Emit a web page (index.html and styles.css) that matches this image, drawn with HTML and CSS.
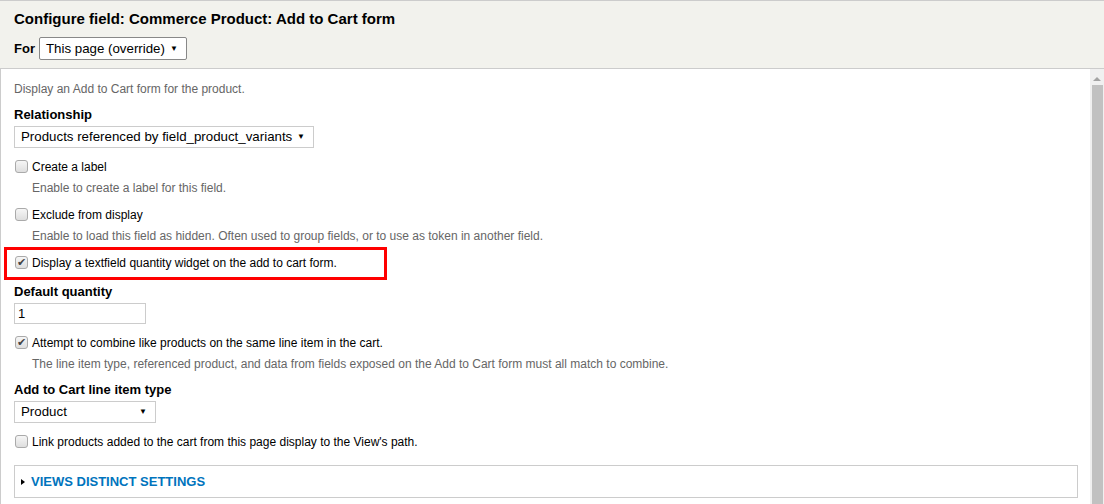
FILE: index.html
```html
<!DOCTYPE html>
<html lang="en">
  <head>
    <meta charset="UTF-8" />
    <title>Configure field</title>
    <link rel="stylesheet" href="styles.css">
  </head>
  <body>
    <div id="dialog">
      <div class="header">
        <h1>Configure field: Commerce Product: Add to Cart form</h1>
        <div class="for-row">
          <span class="for-label">For</span>
          <div class="select select-for">This page (override) <span class="arrow">&#9660;</span></div>
        </div>
      </div>
      <div class="body">
        <div class="content">
          <p class="desc top-desc">Display an Add to Cart form for the product.</p>

          <div class="field">
            <div class="label">Relationship</div>
            <div class="select select-rel">Products referenced by field_product_variants <span class="arrow">&#9660;</span></div>
          </div>

          <div class="check">
            <span class="box"></span>
            <span class="check-text">Create a label</span>
          </div>
          <p class="desc">Enable to create a label for this field.</p>

          <div class="check">
            <span class="box"></span>
            <span class="check-text">Exclude from display</span>
          </div>
          <p class="desc">Enable to load this field as hidden. Often used to group fields, or to use as token in another field.</p>

          <div class="highlight">
            <div class="check">
              <span class="box checked">&#10004;</span>
              <span class="check-text">Display a textfield quantity widget on the add to cart form.</span>
            </div>
          </div>

          <div class="field field-qty">
            <div class="label">Default quantity</div>
            <div class="text-input">1</div>
          </div>

          <div class="check">
            <span class="box checked">&#10004;</span>
            <span class="check-text">Attempt to combine like products on the same line item in the cart.</span>
          </div>
          <p class="desc">The line item type, referenced product, and data from fields exposed on the Add to Cart form must all match to combine.</p>

          <div class="field">
            <div class="label">Add to Cart line item type</div>
            <div class="select select-type">Product <span class="arrow">&#9660;</span></div>
          </div>

          <div class="check">
            <span class="box"></span>
            <span class="check-text">Link products added to the cart from this page display to the View's path.</span>
          </div>

          <div class="fieldset">
            <span class="tri"></span><a href="#">VIEWS DISTINCT SETTINGS</a>
          </div>
        </div>
        <div class="scrollbar">
          <div class="scroll-up"></div>
          <div class="thumb"></div>
        </div>
      </div>
    </div>
  </body>
</html>
```

FILE: styles.css
```css
* {
  box-sizing: border-box;
  margin: 0;
  padding: 0;
}
body {
  background-color: #fff;
  font-family: 'Liberation Sans', Arial, sans-serif;
  color: #000;
  width: 1104px;
  height: 504px;
  overflow: hidden;
}
#dialog {
  border-top: 1px solid #ccc;
  height: 504px;
  display: flex;
  flex-direction: column;
}
.header {
  background-color: #f2f2ed;
  border-bottom: 1px solid #ccc;
  height: 68px;
  padding: 9px 14px 0;
}
h1 {
  font-size: 15px;
  font-weight: bold;
  line-height: 18px;
}
.for-row {
  display: flex;
  align-items: center;
  gap: 4px;
  margin-top: 9px;
}
.for-label {
  font-weight: bold;
  font-size: 13px;
}
.select {
  position: relative;
  font-size: 13.3px;
  background-color: #fff;
  border: 1px solid #ccc;
  height: 22px;
  line-height: 20px;
  padding-left: 6px;
}
.select .arrow {
  position: absolute;
  right: 8px;
  top: 0;
  font-size: 8px;
}
.select-for {
  width: 148px;
  height: 23px;
  border: 1px solid #888;
  border-radius: 2px;
  line-height: 21px;
}
.select-rel {
  width: 300px;
}
.select-type {
  width: 142px;
}
.body {
  flex: 1;
  display: flex;
  border-left: 1px solid #ccc;
  min-height: 0;
}
.content {
  flex: 1;
  padding: 12px 12px 0 13px;
}
.desc {
  font-size: 12px;
  color: #666;
  line-height: 17px;
  margin: 4px 0 0 18px;
}
.desc.top-desc {
  margin: 0;
}
.field {
  margin-top: 9px;
}
.field.field-qty {
  margin-top: 4px;
}
.label {
  font-size: 13px;
  font-weight: bold;
  line-height: 16px;
  margin-bottom: 3px;
}
.check {
  display: flex;
  align-items: center;
  margin-top: 9px;
  height: 18px;
}
.field + .check {
  margin-top: 10px;
}
.box {
  width: 13px;
  height: 13px;
  border: 1px solid #aaa;
  border-radius: 3px;
  background: linear-gradient(#f6f6f6, #dedede);
  margin: -2px 4px 0 1px;
  font-size: 11px;
  line-height: 11px;
  text-align: center;
  color: #444;
}
.check-text {
  font-size: 12px;
}
.highlight {
  border: 3px solid #f00;
  margin: 2px 0 0 -10px;
  width: 383px;
  height: 33px;
  padding: 0 0 0 7px;
}
.highlight .check {
  margin-top: 4px;
}
.text-input {
  width: 132px;
  height: 21px;
  border: 1px solid #ccc;
  font-size: 13px;
  line-height: 19px;
  padding-left: 3px;
}
.fieldset {
  margin-top: 14px;
  border: 1px solid #ccc;
  height: 33px;
  padding: 0 0 0 6px;
  display: flex;
  align-items: center;
}
.tri {
  width: 0;
  height: 0;
  border-top: 3px solid transparent;
  border-bottom: 3px solid transparent;
  border-left: 4px solid #000;
  margin-right: 6px;
}
.fieldset a {
  color: #0074bd;
  font-weight: bold;
  font-size: 13px;
  text-decoration: none;
}
.scrollbar {
  width: 14px;
  background-color: #f0f0f0;
  display: flex;
  flex-direction: column;
  align-items: center;
}
.scroll-up {
  width: 0;
  height: 0;
  border-left: 4px solid transparent;
  border-right: 4px solid transparent;
  border-bottom: 4px solid #a3a3a3;
  margin: 8px 0 4px;
}
.thumb {
  flex: 1;
  width: 11px;
  background-color: #c1c1c1;
}
```
